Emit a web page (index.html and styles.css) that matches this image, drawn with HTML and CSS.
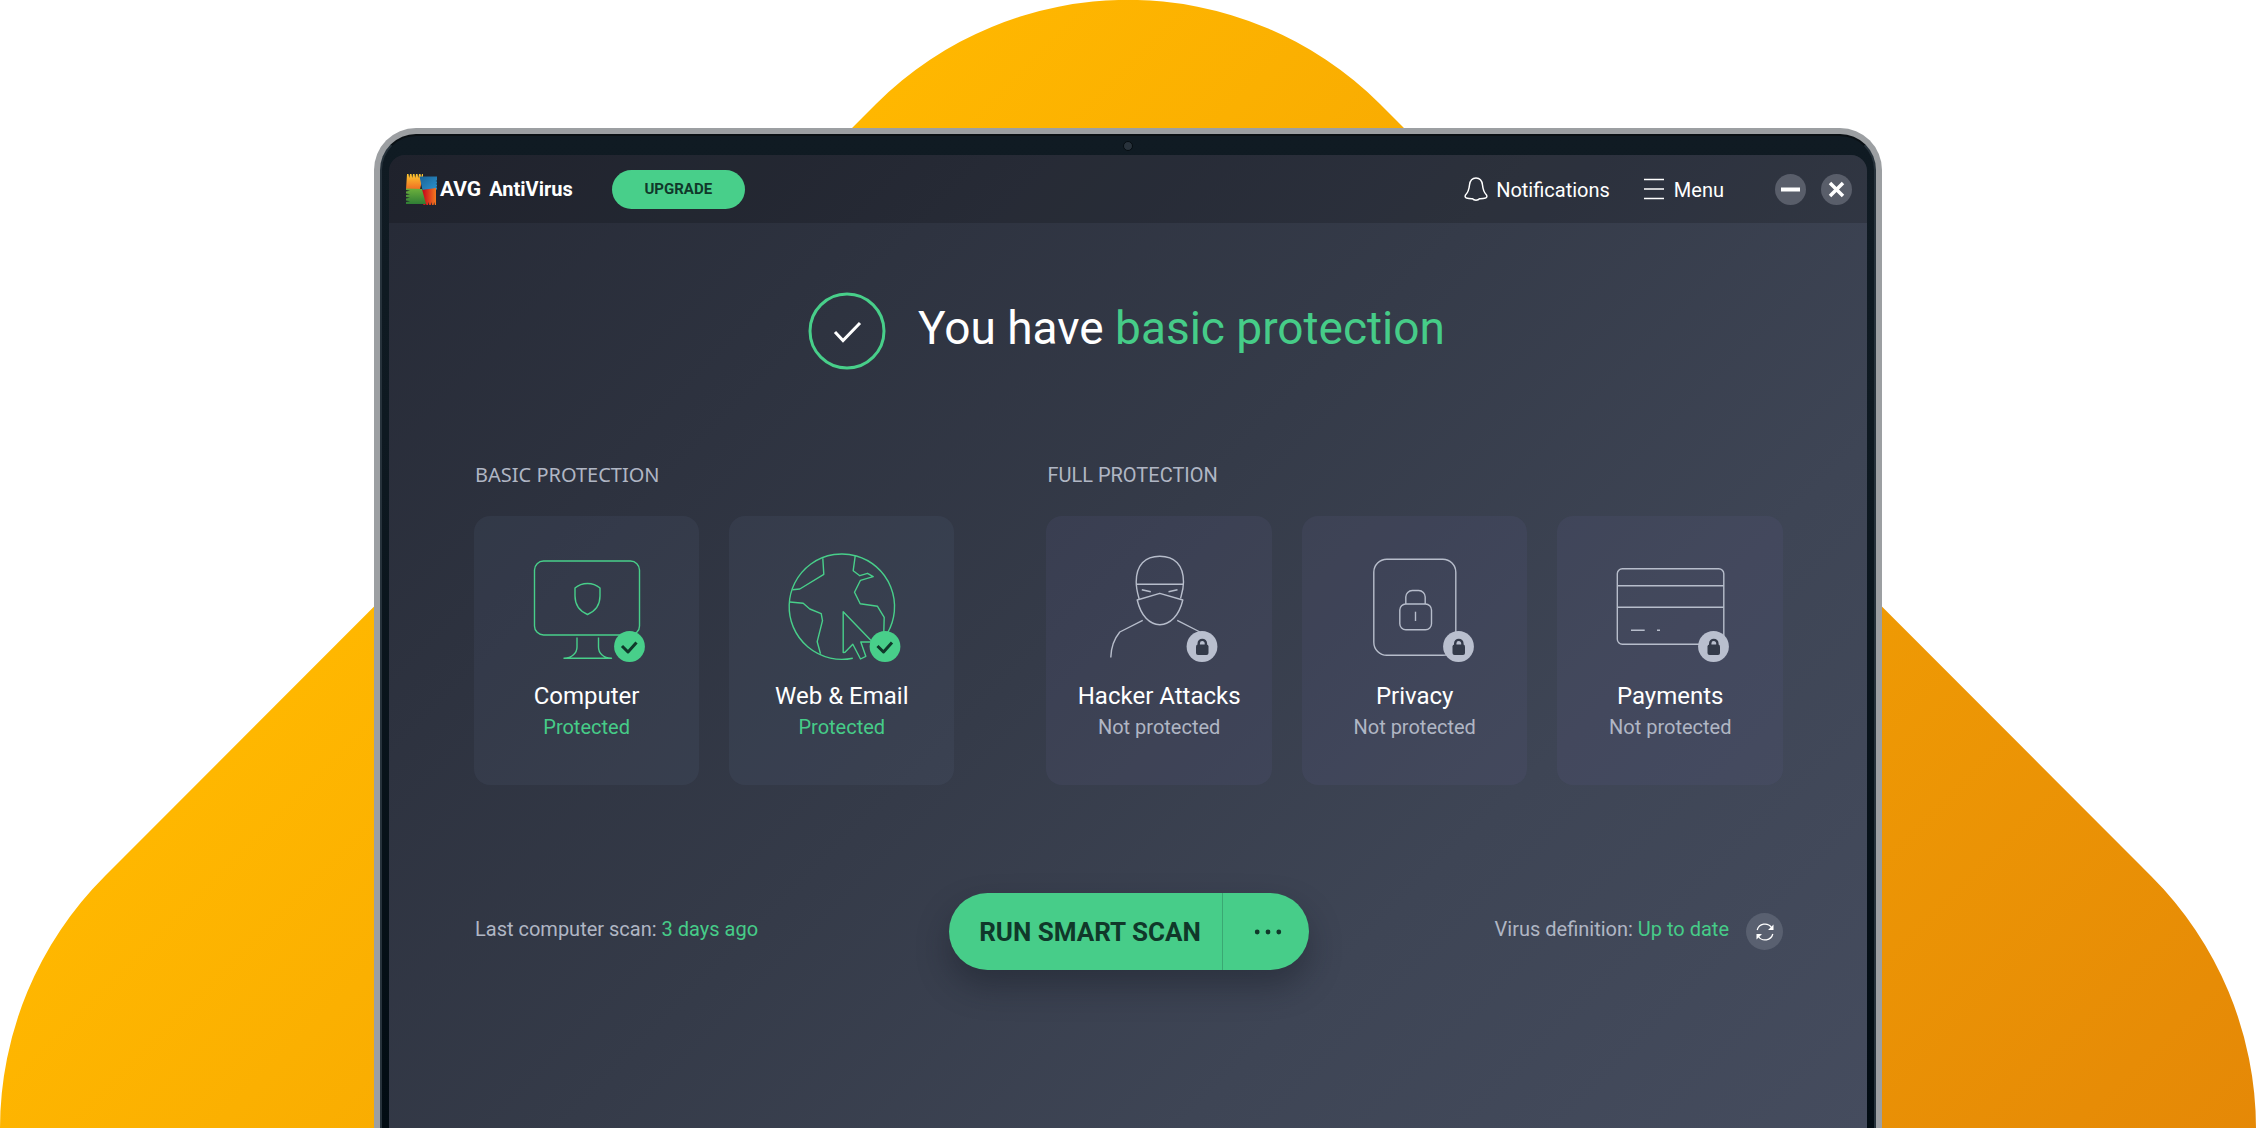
FILE: index.html
```
<!DOCTYPE html>
<html lang="en">
<head>
  <meta charset="UTF-8">
  <meta name="viewport" content="width=device-width, initial-scale=1.0">
  <title>AVG AntiVirus</title>
  <link rel="stylesheet" href="styles.css">
</head>
<body>
  <!-- Orange rounded diamond behind the laptop -->
  <svg class="backdrop" viewBox="0 0 2256 1128" preserveAspectRatio="xMidYMin slice" aria-hidden="true">
    <defs>
      <linearGradient id="orange" gradientUnits="userSpaceOnUse" x1="490" y1="490" x2="1780" y2="1780">
        <stop offset="0" stop-color="#ffb700"/>
        <stop offset="1" stop-color="#e38507"/>
      </linearGradient>
    </defs>
    <path fill="url(#orange)" d="M0 1128A357 357 0 0 1 105 876L876 104A357 357 0 0 1 1380 104L2151 876A357 357 0 0 1 2256 1128Z"/>
  </svg>

  <div class="laptop">
    <div class="bezel">
      <span class="camera"></span>
      <div class="screen">
        <header class="topbar">
          <div class="brand">
            <svg class="brand-mark" viewBox="0 0 33 33" aria-hidden="true">
              <defs>
                <linearGradient id="lo" x1="0" y1="0" x2="0" y2="1"><stop offset="0" stop-color="#fdc82f"/><stop offset="1" stop-color="#ef6c23"/></linearGradient>
                <linearGradient id="lb" x1="0" y1="0" x2="1" y2="1"><stop offset="0" stop-color="#1b6396"/><stop offset="1" stop-color="#2b93cf"/></linearGradient>
                <linearGradient id="lg" x1="0" y1="1" x2="0" y2="0"><stop offset="0" stop-color="#2f7d35"/><stop offset="1" stop-color="#6cb03c"/></linearGradient>
                <linearGradient id="lr" x1="0" y1="0" x2="1" y2="0"><stop offset="0" stop-color="#c4001a"/><stop offset="1" stop-color="#f47a1f"/></linearGradient>
              </defs>
              <path fill="url(#lo)" d="M2 1h1.500l.7 4 .8-4h1.500l.7 4 .8-4h1.500l.7 4 .8-4h1.500l.7 4 .8-4h1.500l.7 3 .8-3h1v3l-3 12-14 .5z"/>
              <path fill="url(#lb)" d="M14.500 3.500H32v4l-1.500.5 1.500.5v2l-1.500.5 1.500.5v2l-1.500.5 1.500.5v2l-14.500.5z"/>
              <path fill="url(#lr)" d="M17 17l14-2v17h-1.200l-.6-3-.6 3h-1.600l-.6-3-.6 3h-1.600l-.6-3-.6 3h-1.600l-.6-2-.6 2h-1.800l-.6-2z"/>
              <path fill="url(#lg)" d="M1 15.500L17 16l4 15H1v-2l4-.7-4-.8v-2l4-.7-4-.8v-2l4-.7-4-.8v-2l4-.7-4-.8z"/>
            </svg>
            <span class="brand-avg">AVG</span>
            <span class="brand-name">AntiVirus</span>
          </div>
          <button class="upgrade">UPGRADE</button>

          <div class="topbar-right">
            <button class="link-btn">
              <svg width="24" height="24" viewBox="0 0 24 24" fill="none" stroke="#fff" stroke-width="1.5" stroke-linejoin="round" aria-hidden="true">
                <path d="M12 1C8 1 6 4 5.500 8C5 13 4 15.500 1.500 18C.8 19.500 1 20.500 2.500 21C5 21.600 7 21.600 8.500 21.700C10 23.600 14 23.600 15.500 21.700C17 21.600 19 21.600 21.500 21C23 20.500 23.200 19.500 22.500 18C20 15.500 19 13 18.500 8C18 4 16 1 12 1z"/>
              </svg>
              <span class="link-text">Notifications</span>
            </button>
            <button class="link-btn menu-btn">
              <svg width="20" height="24" viewBox="0 0 20 24" stroke="#fff" stroke-width="1.600" aria-hidden="true">
                <path d="M0 2.500h20M0 12h20M0 21.500h20"/>
              </svg>
              <span class="link-text">Menu</span>
            </button>
            <button class="round-btn" aria-label="Minimize">
              <svg width="31" height="31" viewBox="0 0 31 31" stroke="#fff" stroke-width="4" aria-hidden="true"><path d="M6 15.500h19"/></svg>
            </button>
            <button class="round-btn" aria-label="Close">
              <svg width="31" height="31" viewBox="0 0 31 31" stroke="#fff" stroke-width="3.500" aria-hidden="true"><path d="M9 9l13 13M22 9L9 22"/></svg>
            </button>
          </div>
        </header>

        <main class="content">
          <div class="status">
            <svg class="status-icon" viewBox="0 0 78 78" fill="none" aria-hidden="true">
              <circle cx="39" cy="39" r="37" stroke="#48cf8a" stroke-width="3"/>
              <path d="M27 40l8 8.500L52 31" stroke="#fff" stroke-width="3"/>
            </svg>
            <h1>You have <span class="green">basic protection</span></h1>
          </div>

          <div class="groups">
            <section class="group">
              <h2 class="alt">BASIC PROTECTION</h2>
              <div class="cards">
                <div class="card on">
                  <svg class="card-icon" viewBox="0 0 120 112" aria-hidden="true">
                    <rect x="7.500" y="11" width="105" height="74" rx="9"/>
                    <path d="M60.500 33.500C56.500 33.500 51.500 35 48 38V46C48 54 52.500 61 60.500 64.500C68.500 61 73 54 73 46V38C69.500 35 64.500 33.500 60.500 33.500z"/>
                    <path d="M50 87.500V97C50 103 45 108 37 108.300H84.500C76 108 71.500 103 71.500 97V87.500"/>
                    <circle class="badge" cx="102.500" cy="96.500" r="15.400"/>
                    <path class="tick" d="M95 96l6 6L109.500 92.500"/>
                  </svg>
                  <h3>Computer</h3>
                  <p>Protected</p>
                </div>
                <div class="card on">
                  <svg class="card-icon" viewBox="0 0 120 112" aria-hidden="true">
                    <path d="M70.800 108.200A52.700 52.700 0 1 1 105.500 83"/>
                    <path d="M40.800 8.300L41.800 24.300 17.800 39 10.500 39.700"/>
                    <path d="M7.800 52L21.200 53.300 27.800 59 39.200 63.700 40.500 70.700 35.200 91.700 38.500 103.700"/>
                    <path d="M73.200 6L71.200 20.700 77.800 25.700 85.500 23.300 91.200 26.700 78.500 30.300 72.500 42.300 78.200 53.700 95.500 56.300 102.200 67.300 101.800 82"/>
                    <path d="M61.200 61.700V102.500L63 102.300 70.800 94.300 78.500 109 83.800 106.300 78.800 92H90.500z"/>
                    <circle class="badge" cx="103" cy="96.500" r="15.400"/>
                    <path class="tick" d="M95.500 96l6 6L110 92.500"/>
                  </svg>
                  <h3>Web &amp; Email</h3>
                  <p>Protected</p>
                </div>
              </div>
            </section>

            <section class="group wide">
              <h2>FULL PROTECTION</h2>
              <div class="cards">
                <div class="card">
                  <svg class="card-icon" viewBox="0 0 120 112" aria-hidden="true">
                    <path d="M40.200 49C38.500 43 37.200 39 37.200 32C37.200 15 46 6.200 60.800 6.200S84.500 15 84.500 32C84.500 39 83 43 81.500 48.500"/>
                    <path d="M37.200 34.300H84.500"/>
                    <path d="M42.800 39.700l9 2M69.500 41.700l9-2"/>
                    <path d="M38.200 50L60.800 43.300 83.800 50C80 66 71 74.700 60.800 74.700S42 66 38.200 50z"/>
                    <path d="M43.700 70.300L20.800 82C15 89 12 97 11.800 107.500M78.200 70.300L101 82"/>
                    <circle class="badge" cx="103" cy="96.500" r="15.400"/>
                    <rect class="lock-body" x="97" y="94.500" width="12.500" height="10.500" rx="2"/>
                    <path class="lock-arc" d="M99.700 96V93.500a3.600 3.600 0 0 1 7.200 0V96"/>
                  </svg>
                  <h3>Hacker Attacks</h3>
                  <p>Not protected</p>
                </div>
                <div class="card">
                  <svg class="card-icon" viewBox="0 0 120 112" aria-hidden="true">
                    <rect x="18.800" y="9.300" width="82" height="96" rx="13"/>
                    <path d="M50.800 54V47a6.500 6.500 0 0 1 6.500-6.500h6.400a6.500 6.500 0 0 1 6.500 6.500V54"/>
                    <rect x="44.800" y="54" width="31.700" height="25.700" rx="6"/>
                    <path d="M60.500 61.700V71"/>
                    <circle class="badge" cx="103.500" cy="96.500" r="15.400"/>
                    <rect class="lock-body" x="97.500" y="94.500" width="12.500" height="10.500" rx="2"/>
                    <path class="lock-arc" d="M100.200 96V93.500a3.600 3.600 0 0 1 7.200 0V96"/>
                  </svg>
                  <h3>Privacy</h3>
                  <p>Not protected</p>
                </div>
                <div class="card">
                  <svg class="card-icon" viewBox="0 0 120 112" aria-hidden="true">
                    <rect x="7.300" y="18.700" width="106.500" height="75.600" rx="5"/>
                    <path d="M7.300 35.700H113.800M7.300 57.300H113.800M21 80.300H34.700M47 80.300H50"/>
                    <circle class="badge" cx="103.500" cy="96.500" r="15.400"/>
                    <rect class="lock-body" x="97.500" y="94.500" width="12.500" height="10.500" rx="2"/>
                    <path class="lock-arc" d="M100.200 96V93.500a3.600 3.600 0 0 1 7.200 0V96"/>
                  </svg>
                  <h3>Payments</h3>
                  <p>Not protected</p>
                </div>
              </div>
            </section>
          </div>

          <footer class="actions">
            <p class="info">Last computer scan: <span class="green">3 days ago</span></p>
            <div class="scan">
              <button class="scan-main">RUN SMART SCAN</button>
              <button class="scan-more" aria-label="More scans">
                <svg width="28" height="6" viewBox="0 0 28 6" fill="#10382a" aria-hidden="true"><circle cx="3.200" cy="3" r="2.400"/><circle cx="14" cy="3" r="2.400"/><circle cx="24.800" cy="3" r="2.400"/></svg>
              </button>
            </div>
            <div class="definition">
              <p class="info">Virus definition: <span class="green">Up to date</span></p>
              <button class="refresh" aria-label="Refresh">
                <svg width="18" height="18" viewBox="0 0 18 18" fill="none" stroke="#fff" stroke-width="1.300" aria-hidden="true">
                  <path d="M1.200 7A8 8 0 0 1 15.500 4.500M16.800 11A8 8 0 0 1 2.500 13.500"/>
                  <path fill="#fff" stroke="none" d="M17.500 1.500v5.500h-5.500zM.5 16.500v-5.500h5.500z"/>
                </svg>
              </button>
            </div>
          </footer>
        </main>
      </div>
    </div>
  </div>
</body>
</html>
```
FILE: styles.css
```
/* General Styling */
* {
  box-sizing: border-box;
}

body {
  margin: 0;
  min-height: 100vh;
  display: flex;
  justify-content: center;
  padding: 128px 32px 0;
  background: #fff;
  font-family: Roboto, "Liberation Sans", sans-serif;
  font-size: 20px;
  line-height: 24px;
  color: #fff;
}

h1, h2, h3, p {
  margin: 0;
  font-weight: 400;
}

button {
  border: none;
  padding: 0;
  background: none;
  font: inherit;
  color: inherit;
  cursor: pointer;
}

svg {
  display: block;
}

.green {
  color: #46cc88;
}

.backdrop {
  position: absolute;
  top: 0;
  left: 0;
  width: 100%;
  height: 100%;
  z-index: -1;
}

/* Laptop frame */
.laptop {
  width: 100%;
  max-width: 1508px;
  display: flex;
  padding: 6px 6px 0;
  border-radius: 42px 42px 0 0;
  background: #9c9fa2;
}

.bezel {
  flex: 1;
  display: flex;
  flex-direction: column;
  align-items: center;
  padding: 0 7px;
  border: 2px solid #0a1014;
  border-bottom: none;
  border-left-color: #26323b;
  border-right-color: #26323b;
  border-radius: 36px 36px 0 0;
  background: linear-gradient(#101b23, #0e1921 30%, #020c13);
}

.camera {
  width: 10px;
  height: 10px;
  margin: 5px 0 4px;
  border: 1px solid #060d12;
  border-radius: 50%;
  background: #28323b;
}

.screen {
  flex: 1;
  align-self: stretch;
  border-radius: 16px 16px 0 0;
  background: linear-gradient(135deg, #262a36, #353b49 47%, #3e4555 72%, #454c5e);
  overflow: hidden;
}

/* Top bar */
.topbar {
  height: 68px;
  display: flex;
  align-items: center;
  padding: 0 15px 0 16px;
  background: rgba(0, 0, 0, 0.17);
}

.brand {
  display: flex;
  align-items: center;
  font-weight: 700;
}

.brand-mark {
  width: 33px;
  height: 33px;
}

.brand-avg {
  margin: 0 8px 0 2px;
  font-size: 21px;
}

.upgrade {
  width: 133px;
  height: 39px;
  margin-left: 39px;
  border-radius: 20px;
  background: #48cf8a;
  color: #10382a;
  font-size: 15px;
  font-weight: 700;
}

.topbar-right {
  margin-left: auto;
  display: flex;
  align-items: center;
}

.link-btn {
  display: flex;
  align-items: center;
  gap: 8px;
  margin-right: 34px;
}

.link-text {
  padding-top: 2px;
}

.menu-btn {
  margin-right: 51px;
  gap: 10px;
}

.round-btn {
  border-radius: 50%;
  background: #595e6a;
}

.round-btn + .round-btn {
  margin-left: 15px;
}

/* Main area */
.content {
  padding: 69px 84px 60px 85px;
}

.status {
  display: flex;
  justify-content: center;
  align-items: center;
  gap: 32px;
  padding-right: 4px;
}

.status-icon {
  width: 78px;
  height: 78px;
}

.status h1 {
  padding-bottom: 6px;
  font-size: 46px;
  line-height: 56px;
}

.groups {
  display: flex;
  gap: 92px;
  margin-top: 93px;
}

.group {
  flex: 480;
}

.group.wide {
  flex: 736;
}

.group h2 {
  font-size: 20px;
  line-height: 24px;
  color: #b0b6c4;
  padding-left: 1px;
}

.group .alt {
  font-family: "Noto Sans", "Open Sans", sans-serif;
}

.cards {
  display: flex;
  gap: 30px;
  margin-top: 29px;
}

.card {
  flex: 1;
  display: flex;
  flex-direction: column;
  align-items: center;
  padding: 34px 0 46px;
  border-radius: 16px;
  background: rgba(95, 95, 135, 0.16);
  color: #b0b6c4;
}

.card.on {
  background: rgba(90, 105, 135, 0.14);
  color: #46cc88;
}

.card-icon {
  width: 120px;
  height: 112px;
  fill: none;
  stroke: #b7bdcb;
  stroke-width: 1.4;
  stroke-linejoin: round;
}

.card.on .card-icon {
  stroke: #48cf8a;
}

.card-icon .badge {
  fill: #b9bfce;
  stroke: none;
}

.card.on .badge {
  fill: #48cf8a;
}

.card-icon .tick {
  stroke: #10382a;
  stroke-width: 3;
}

.card-icon .lock-body {
  fill: #333a49;
  stroke: none;
}

.card-icon .lock-arc {
  stroke: #333a49;
  stroke-width: 2.4;
}

.card h3 {
  margin: 20px 0 5px;
  font-size: 24px;
  line-height: 28px;
  color: #fff;
}

/* Bottom actions */
.actions {
  display: grid;
  grid-template-columns: 1fr auto 1fr;
  align-items: center;
  margin-top: 108px;
}

.info {
  padding: 0 0 6px 1px;
  color: #b0b6c4;
}

.scan {
  width: 360px;
  height: 77px;
  display: flex;
  border-radius: 39px;
  background: #47cd89;
  box-shadow: 0 16px 32px rgba(20, 24, 36, 0.4);
  color: #10382a;
}

.scan-main {
  flex: 1;
  padding-left: 10px;
  border-right: 1px solid #3aa873;
  font-size: 26px;
  font-weight: 700;
}

.scan-more {
  width: 86px;
  display: flex;
  justify-content: center;
  align-items: center;
  padding-left: 4px;
}

.definition {
  display: flex;
  justify-content: flex-end;
  align-items: center;
  gap: 17px;
}

.refresh {
  width: 37px;
  height: 37px;
  display: flex;
  justify-content: center;
  align-items: center;
  border-radius: 50%;
  background: #596070;
}
```
